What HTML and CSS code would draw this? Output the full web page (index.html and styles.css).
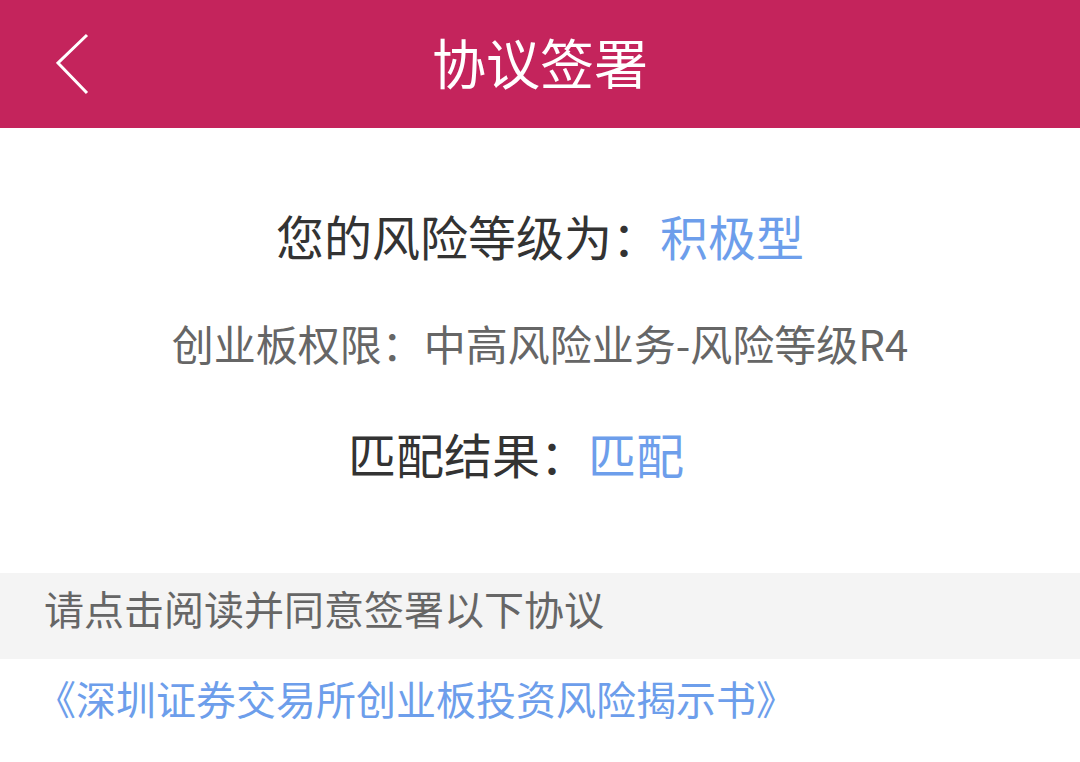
FILE: index.html
```html
<!DOCTYPE html>
<html lang="zh-CN">
<head>
    <meta charset="UTF-8">
    <meta name="viewport" content="width=device-width, initial-scale=1.0">
    <title>协议签署</title>
    <link rel="stylesheet" href="styles.css">
</head>
<body>

    <header class="top-bar">
        <a class="back-btn" href="#back">
            <svg width="40" height="64" viewBox="0 0 40 64">
                <polyline points="31,4 2,32 31,62" fill="none" stroke="#fff" stroke-width="3" stroke-linejoin="miter"/>
            </svg>
        </a>
        <h1 class="title">协议签署</h1>
    </header>

    <section class="risk-info">
        <p class="risk-level">您的风险等级为：<span class="hl">积极型</span></p>
        <p class="risk-board">创业板权限：中高风险业务-风险等级R4</p>
        <p class="risk-match">匹配结果：<span class="hl">匹配</span></p>
    </section>

    <div class="hint">请点击阅读并同意签署以下协议</div>

    <ul class="agreements">
        <li><a href="#doc">《深圳证券交易所创业板投资风险揭示书》</a></li>
    </ul>

</body>
</html>
```

FILE: styles.css
```css
/* Base */
body {
    margin: 0;
    padding: 0;
    background-color: #fff;
    font-family: "Noto Sans CJK SC", "Noto Sans", sans-serif;
    color: #333;
}

/* Header */
.top-bar {
    position: relative;
    height: 128px;
    background-color: #c4245c;
    display: flex;
    align-items: center;
    justify-content: center;
}

.back-btn {
    position: absolute;
    left: 56px;
    top: 31px;
    display: block;
}

.back-btn svg {
    display: block;
}

.title {
    margin: 0 0 4px;
    color: #fff;
    font-size: 54px;
    font-weight: normal;
    line-height: 60px;
}

/* Risk info */
.risk-info {
    padding: 77px 0 90px;
    text-align: center;
}

.risk-info p {
    margin: 0;
    line-height: 60px;
}

.risk-level,
.risk-match {
    font-size: 48px;
    color: #333;
}

.risk-match {
    padding-right: 48px;
}

.risk-board {
    font-size: 42px;
    color: #666;
    margin: 48px 0 50px !important;
}

.hl {
    color: #6d9eeb;
}

/* Hint band */
.hint {
    height: 70px;
    line-height: 70px;
    padding: 0 0 16px 44px;
    background-color: #f4f4f4;
    font-size: 40px;
    color: #666;
}

/* Agreement list */
.agreements {
    list-style: none;
    margin: 0;
    padding: 9px 0 0 36px;
}

.agreements li {
    line-height: 60px;
}

.agreements a {
    font-size: 40px;
    color: #6d9eeb;
    text-decoration: none;
}
```
